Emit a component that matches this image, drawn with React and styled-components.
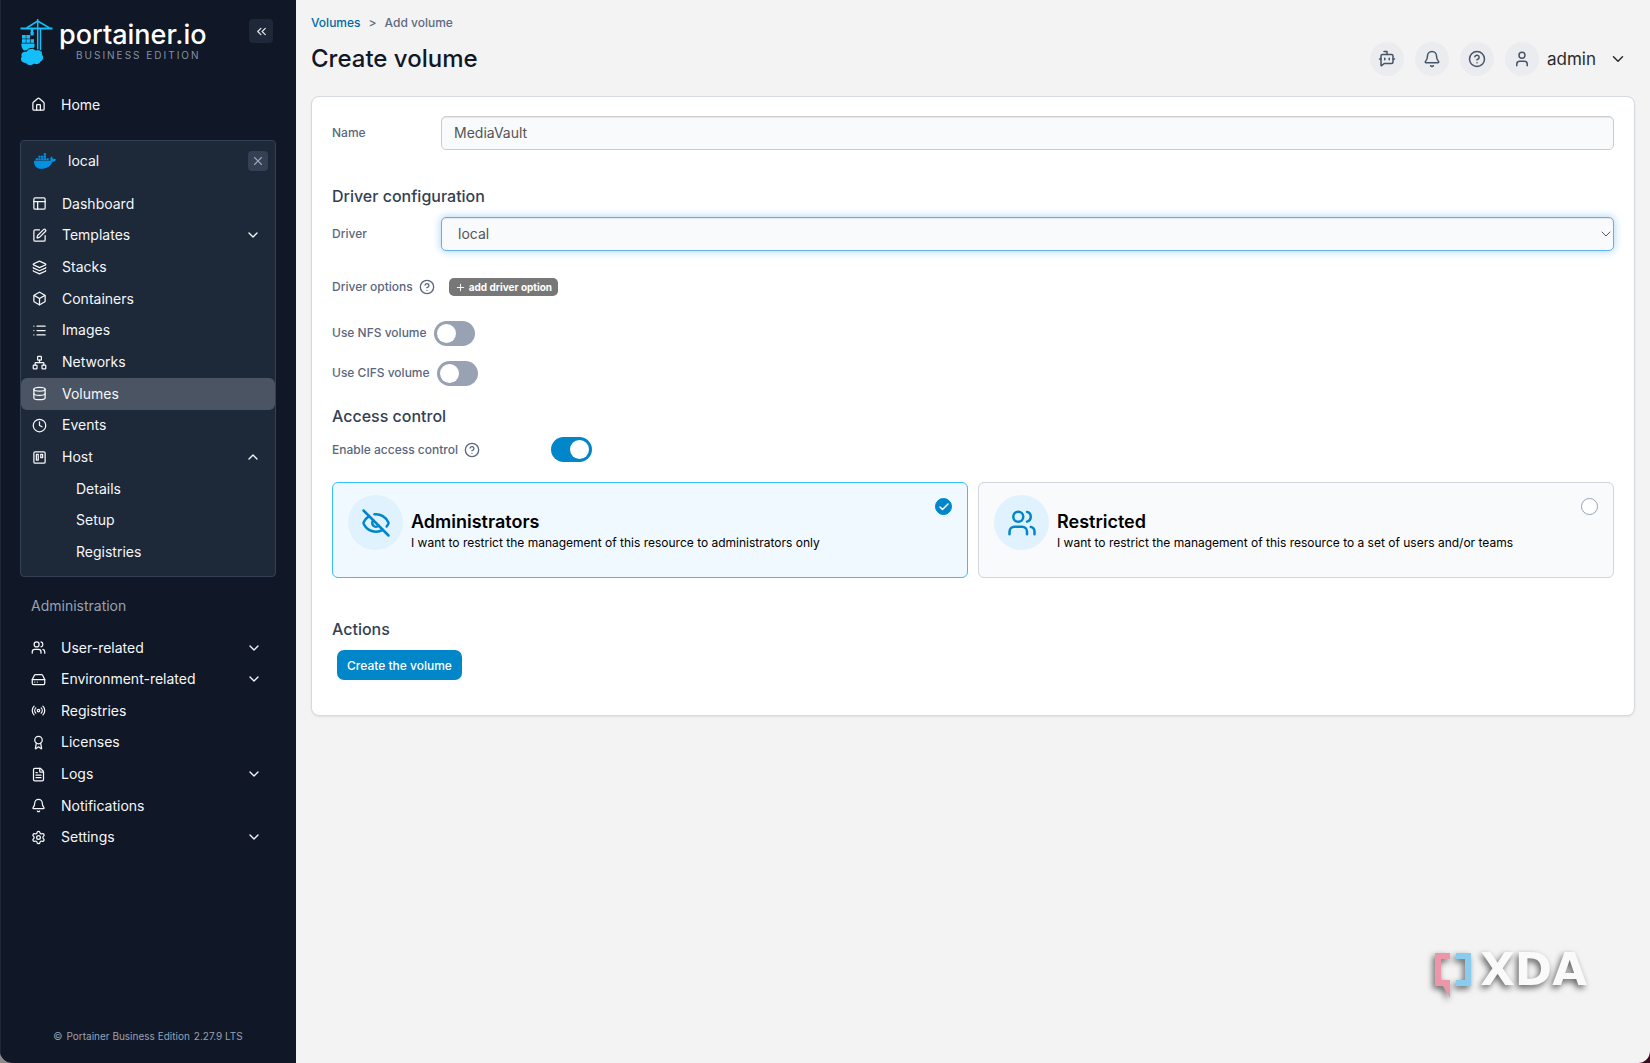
import React, { useState } from "react";
import styled, { createGlobalStyle } from "styled-components";
import {
    Award, Bell, BotMessageSquare, Box, Check, ChevronDown, ChevronUp, ChevronsLeft, CircleHelp, Clock,
    Database, Edit, EyeOff, FileText, HardDrive, Home, Layers, Layout, List, Network, Plus, Radio,
    Settings, Trello, User, Users, X
} from "lucide-react";
import { FaDocker } from "react-icons/fa";

const GlobalStyle = createGlobalStyle`
    * {
        box-sizing: border-box;
    }
    body {
        margin: 0;
        font-family: Inter, "Liberation Sans", sans-serif;
        background: linear-gradient(to right, #8d8a88, #3c0a20);
    }
    button, input, select {
        font-family: inherit;
    }
`;

// whole window, corners are rounded at the bottom
const Page = styled.div`
    display: flex;
    min-height: 100vh;
    border-radius: 0 0 12px 12px;
    overflow: hidden;
    background-color: #f3f3f3;
`;

// ---------- sidebar ----------

const Sidebar = styled.aside`
    display: flex;
    flex-direction: column;
    flex: 0 0 296px;
    padding: 19px 20px 16px 19px;
    border-left: 1px solid #1f2735;
    background-color: #101726;
    color: #f5f7fa;
`;

const SidebarHeader = styled.div`
    display: flex;
    align-items: flex-start;
    height: 48px;
    margin-bottom: 21px;
`;

const BrandText = styled.div`
    display: flex;
    flex-direction: column;
    flex: 1;
    padding-left: 5px;
`;

const BrandName = styled.span`
    font-size: 27px;
    line-height: 32px;
    font-weight: 500;
    color: #ffffff;
`;

const BrandEdition = styled.span`
    padding-left: 17px;
    font-size: 10px;
    line-height: 8px;
    font-weight: 400;
    letter-spacing: 2px;
    color: #8791a3;
`;

const SquareButton = styled.button`
    display: flex;
    align-items: center;
    justify-content: center;
    width: ${props => props.$size}px;
    height: ${props => props.$size}px;
    margin: 0 ${props => props.$end}px 0 auto;
    padding: 0;
    border: none;
    border-radius: 4px;
    background-color: ${props => props.$bg};
    color: ${props => props.$color};
`;

const EnvironmentBox = styled.section`
    margin: 19px 0;
    padding-bottom: 8px;
    border: 1px solid #344054;
    border-radius: 4px;
    background-color: #1d2838;
`;

const EnvironmentHeader = styled.div`
    display: flex;
    align-items: center;
    gap: 12px;
    height: 40px;
    margin-bottom: 7px;
    padding-left: 13px;
    font-size: 14px;
    line-height: 16px;
`;

// rows share the height of the list equally
const NavList = styled.ul`
    display: grid;
    grid-auto-rows: 1fr;
    min-height: ${props => props.$height}px;
    margin: 0;
    padding: 0;
    list-style: none;
`;

const NavLink = styled.a`
    display: flex;
    align-items: center;
    gap: 15px;
    height: 100%;
    padding: 0 14px 0 ${props => props.$nested ? 55 : 11}px;
    border-radius: 6px;
    background-color: ${props => props.$active ? '#4a5463' : 'transparent'};
    color: inherit;
    font-size: 14px;
    line-height: 20px;
    text-decoration: none;
    svg {
        flex: none;
    }
    svg:last-child:not(:first-child) {
        margin-left: auto;
    }
`;

const SidebarTitle = styled.h2`
    margin: 0 0 16px;
    padding-left: 11px;
    font-size: 14px;
    line-height: 20px;
    font-weight: 400;
    color: #98a2b3;
`;

const SidebarFooter = styled.footer`
    display: flex;
    justify-content: center;
    gap: 4px;
    margin-top: auto;
    font-size: 10px;
    line-height: 22px;
    color: #98a2b3;
`;

// ---------- content ----------

const Main = styled.main`
    display: flex;
    flex-direction: column;
    flex: 1;
    min-width: 0;
    padding: 14px 15px 64px;
`;

const Breadcrumbs = styled.nav`
    display: flex;
    gap: 8px;
    font-size: 12px;
    line-height: 17px;
    font-weight: 500;
    color: #5d6a82;
    a {
        color: #026aa2;
        text-decoration: none;
    }
`;

const TitleBar = styled.header`
    display: flex;
    align-items: center;
    justify-content: space-between;
    height: 34px;
    margin: 11px 0 20px;
`;

const Title = styled.h1`
    margin: 0;
    font-size: 24px;
    line-height: 32px;
    font-weight: 500;
    color: #101828;
`;

const HeaderActions = styled.div`
    display: flex;
    align-items: center;
    gap: 11px;
`;

const RoundButton = styled.button`
    display: flex;
    align-items: center;
    justify-content: center;
    width: 34px;
    height: 34px;
    padding: 0;
    border: none;
    border-radius: 50%;
    background-color: #eaecf0;
    color: #475467;
`;

const UserMenu = styled.button`
    display: flex;
    align-items: center;
    padding: 0 8px 0 0;
    border: none;
    background: none;
    color: #2b2b2b;
    font-size: 17px;
    line-height: 24px;
`;

const Avatar = styled.span`
    display: flex;
    align-items: center;
    justify-content: center;
    width: 34px;
    height: 34px;
    margin-right: 8px;
    border-radius: 50%;
    background-color: #eaecf0;
    color: #475467;
`;

const UserName = styled.span`
    margin-right: 13px;
`;

const Card = styled.form`
    padding: 19px 20px 35px;
    border: 1px solid #d5d9e0;
    border-radius: 8px;
    background-color: #ffffff;
    box-shadow: 0 1px 2px rgba(16, 24, 40, 0.08);
`;

const FieldRow = styled.div`
    display: grid;
    grid-template-columns: ${props => props.$labelWidth || 109}px 1fr;
    align-items: center;
`;

const InlineRow = styled.div`
    display: flex;
    align-items: center;
    gap: ${props => props.$gap}px;
    height: 26px;
    margin-top: ${props => props.$top}px;
`;

const Label = styled.label`
    display: flex;
    align-items: center;
    gap: 6px;
    font-size: 12px;
    line-height: 18px;
    font-weight: 500;
    color: #5a6780;
`;

const SectionTitle = styled.h2`
    margin: ${props => props.$top}px 0 11px;
    font-size: 16px;
    line-height: 20px;
    font-weight: 500;
    color: #344054;
`;

const TextInput = styled.input`
    width: 100%;
    height: 34px;
    padding: 0 12px 2px;
    border: 1px solid #cccccc;
    border-radius: 5px;
    background-color: #f9fafb;
    box-shadow: inset 0 1px 1px rgba(0, 0, 0, 0.08);
    color: #555555;
    font-size: 14px;
`;

const SelectWrapper = styled.div`
    position: relative;
    svg {
        position: absolute;
        right: 0;
        top: 9px;
        color: #555555;
        pointer-events: none;
    }
`;

const Select = styled.select`
    display: block;
    width: 100%;
    height: 34px;
    padding: 0 16px 2px;
    border: 1px solid #66afe9;
    border-radius: 5px;
    outline: none;
    appearance: none;
    background-color: #f9fafb;
    box-shadow: inset 0 1px 1px rgba(0, 0, 0, 0.08), 0 0 8px rgba(102, 175, 233, 0.6);
    color: #555555;
    font-size: 14px;
`;

const BadgeButton = styled.button`
    display: flex;
    align-items: center;
    gap: 3px;
    height: 18px;
    padding: 0 6px;
    border: none;
    border-radius: 5px;
    background-color: #777777;
    color: #ffffff;
    font-size: 10px;
    line-height: 18px;
    font-weight: 700;
`;

const Toggle = styled.input.attrs({ type: 'checkbox' })`
    display: flex;
    align-items: center;
    justify-content: ${props => props.checked ? 'flex-end' : 'flex-start'};
    width: 41px;
    height: 25px;
    margin: 0;
    padding: 3px;
    border-radius: 13px;
    appearance: none;
    background-color: ${props => props.checked ? '#0086c9' : '#98a2b3'};
    &::before {
        content: '';
        width: 19px;
        height: 19px;
        border-radius: 50%;
        background-color: #ffffff;
    }
`;

const AccessOptions = styled.div`
    display: grid;
    grid-template-columns: 1fr 1fr;
    gap: 10px;
    margin-top: 20px;
`;

const AccessOption = styled.label`
    display: flex;
    align-items: flex-start;
    min-height: 96px;
    padding: 12px 15px;
    border: 1px solid ${props => props.$selected ? '#36bffa' : '#d0d5dd'};
    border-radius: 6px;
    background-color: ${props => props.$selected ? '#f0f9ff' : '#f9fafb'};
    color: #000000;
`;

const OptionIcon = styled.span`
    display: flex;
    align-items: center;
    justify-content: center;
    width: 55px;
    height: 55px;
    margin-right: 8px;
    border-radius: 50%;
    background-color: #e0f2fe;
    color: #0086c9;
`;

const OptionText = styled.span`
    display: flex;
    flex-direction: column;
    flex: 1;
    padding-top: 16px;
`;

const OptionTitle = styled.strong`
    font-size: 18px;
    line-height: 22px;
    font-weight: 600;
`;

const OptionDescription = styled.span`
    font-size: 12px;
    line-height: 20px;
`;

const RadioMark = styled.span`
    display: grid;
    place-items: center;
    margin-top: 3px;
    color: #ffffff;
    svg, input {
        grid-area: 1 / 1;
    }
`;

const RadioInput = styled.input.attrs({ type: 'radio' })`
    width: 17px;
    height: 17px;
    margin: 0;
    border: 1px solid ${props => props.checked ? '#0086c9' : '#98a2b3'};
    border-radius: 50%;
    appearance: none;
    background-color: ${props => props.checked ? '#0086c9' : '#ffffff'};
`;

const PrimaryButton = styled.button`
    height: 30px;
    margin-left: 5px;
    padding: 0 10px;
    border: none;
    border-radius: 7px;
    background-color: #0086c9;
    color: #ffffff;
    font-size: 12px;
    font-weight: 500;
`;

const Watermark = styled.div`
    display: flex;
    align-items: flex-start;
    gap: 8px;
    margin: auto 48px 0 auto;
    color: #fafafa;
    font-family: "DejaVu Sans", sans-serif;
    font-size: 45px;
    line-height: 34px;
    font-weight: 700;
    filter: drop-shadow(-2px 3px 3px rgba(0, 0, 0, 0.6));
`;

const CraneLogo = () => (
    <svg width="34" height="48" viewBox="0 0 34 48" fill="none" stroke="#13bef9" aria-hidden="true">
        <path d="M0.5 9.5H32.5" strokeWidth="1.8" />
        <path d="M17.7 0V32M20.5 9V34M17.7 2L6.5 9M17.7 2L29.5 9" strokeWidth="1.5" />
        <path d="M12 10V15" strokeWidth="2.6" />
        <g fill="#13bef9" stroke="none">
            <rect x="10.6" y="13" width="3" height="3.5" />
            <rect x="2" y="16" width="3.8" height="3.6" />
            <rect x="6.3" y="16" width="3.8" height="3.6" />
            <rect x="2" y="20.2" width="3.8" height="3.6" />
            <rect x="6.3" y="20.2" width="3.8" height="3.6" />
            <rect x="10.6" y="20.2" width="3.4" height="3.6" />
            <path d="M1.3 24.5H14.5V28L10 31.5H4C2 30 1.3 27.5 1.3 24.5Z" />
        </g>
        <path
            d="M6 44C2 44.5-.5 40.5 1.8 37.8C.3 34.5 3.5 31.5 6.5 32.5C8 28.8 14 28.5 15.7 31.3C19 29.8 22.5 32 22 35.5C24.2 38 23 41.5 20.5 42.5C19.5 45 16 45.8 14 44.5C11.5 46.8 7.5 46.5 6 44Z"
            fill="#13bef9"
            strokeWidth="0"
        />
        <path d="M2.5 33.5C3.5 32.3 5 32 6.5 32.3C8 28.8 14 28.5 15.7 31.1C18 30 20 30.8 21 32.2" stroke="#101726" strokeWidth="1" />
    </svg>
);

// brackets of the watermark
const XdaMark = () => (
    <svg width="37" height="46" viewBox="0 0 37 46" aria-hidden="true">
        <path d="M0 0H15V6H6V27H15V45L8 33H0Z" fill="#ec96aa" />
        <path d="M21 0H36V33H21V27H30V6H21Z" fill="#8bcbed" />
    </svg>
);

const environmentItems = [
    { label: 'Dashboard', icon: Layout },
    { label: 'Templates', icon: Edit, chevron: 'down' },
    { label: 'Stacks', icon: Layers },
    { label: 'Containers', icon: Box },
    { label: 'Images', icon: List },
    { label: 'Networks', icon: Network },
    { label: 'Volumes', icon: Database, active: true },
    { label: 'Events', icon: Clock },
    { label: 'Host', icon: Trello, chevron: 'up' },
    { label: 'Details', nested: true },
    { label: 'Setup', nested: true },
    { label: 'Registries', nested: true },
];

const adminItems = [
    { label: 'User-related', icon: Users, chevron: 'down' },
    { label: 'Environment-related', icon: HardDrive, chevron: 'down' },
    { label: 'Registries', icon: Radio },
    { label: 'Licenses', icon: Award },
    { label: 'Logs', icon: FileText, chevron: 'down' },
    { label: 'Notifications', icon: Bell },
    { label: 'Settings', icon: Settings, chevron: 'down' },
];

const NavItem = ({ item }) => {
    const Icon = item.icon;
    return (
        <li>
            <NavLink href="#" $active={item.active} $nested={item.nested}>
                {Icon && <Icon size={15} />}
                <span>{item.label}</span>
                {item.chevron === 'down' && <ChevronDown size={16} />}
                {item.chevron === 'up' && <ChevronUp size={16} />}
            </NavLink>
        </li>
    );
};

const accessOptions = [
    {
        id: 'administrators',
        icon: EyeOff,
        title: 'Administrators',
        text: 'I want to restrict the management of this resource to administrators only',
    },
    {
        id: 'restricted',
        icon: Users,
        title: 'Restricted',
        text: 'I want to restrict the management of this resource to a set of users and/or teams',
    },
];

const App = () => {
    const [name, setName] = useState('MediaVault');
    const [nfs, setNfs] = useState(false);
    const [cifs, setCifs] = useState(false);
    const [accessControl, setAccessControl] = useState(true);
    const [ownership, setOwnership] = useState('administrators');

    return (
        <>
            <GlobalStyle />
            <Page>
                <Sidebar>
                    <SidebarHeader>
                        <CraneLogo />
                        <BrandText>
                            <BrandName>portainer.io</BrandName>
                            <BrandEdition>BUSINESS EDITION</BrandEdition>
                        </BrandText>
                        <SquareButton type="button" aria-label="Collapse" $size={24} $end={3} $bg="#1d2838" $color="#e4e7ec">
                            <ChevronsLeft size={15} />
                        </SquareButton>
                    </SidebarHeader>
                    <NavList $height={33}>
                        <NavItem item={{ label: 'Home', icon: Home }} />
                    </NavList>
                    <EnvironmentBox>
                        <EnvironmentHeader>
                            <FaDocker size={22} color="#0091e2" />
                            <span>local</span>
                            <SquareButton type="button" aria-label="Close" $size={20} $end={7} $bg="#344054" $color="#98a2b3">
                                <X size={14} />
                            </SquareButton>
                        </EnvironmentHeader>
                        <NavList $height={380}>
                            {environmentItems.map(item => <NavItem key={item.label} item={item} />)}
                        </NavList>
                    </EnvironmentBox>
                    <SidebarTitle>Administration</SidebarTitle>
                    <NavList $height={221}>
                        {adminItems.map(item => <NavItem key={item.label} item={item} />)}
                    </NavList>
                    <SidebarFooter>
                        <span>©</span>
                        <span>Portainer Business Edition</span>
                        <span>2.27.9 LTS</span>
                    </SidebarFooter>
                </Sidebar>
                <Main>
                    <Breadcrumbs>
                        <a href="#">Volumes</a>
                        <span>&gt;</span>
                        <span>Add volume</span>
                    </Breadcrumbs>
                    <TitleBar>
                        <Title>Create volume</Title>
                        <HeaderActions>
                            <RoundButton type="button" aria-label="Assistant"><BotMessageSquare size={18} /></RoundButton>
                            <RoundButton type="button" aria-label="Notifications"><Bell size={18} /></RoundButton>
                            <RoundButton type="button" aria-label="Help"><CircleHelp size={18} /></RoundButton>
                            <UserMenu type="button">
                                <Avatar><User size={18} /></Avatar>
                                <UserName>admin</UserName>
                                <ChevronDown size={18} />
                            </UserMenu>
                        </HeaderActions>
                    </TitleBar>
                    <Card onSubmit={e => e.preventDefault()}>
                        <FieldRow>
                            <Label htmlFor="name">Name</Label>
                            <TextInput id="name" value={name} onChange={e => setName(e.target.value)} />
                        </FieldRow>
                        <SectionTitle $top={36}>Driver configuration</SectionTitle>
                        <FieldRow>
                            <Label htmlFor="driver">Driver</Label>
                            <SelectWrapper>
                                <Select id="driver" defaultValue="local">
                                    <option value="local">local</option>
                                </Select>
                                <ChevronDown size={16} strokeWidth={1.5} />
                            </SelectWrapper>
                        </FieldRow>
                        <InlineRow $gap={14} $top={23}>
                            <Label as="span">Driver options <CircleHelp size={16} /></Label>
                            <BadgeButton type="button"><Plus size={11} /> add driver option</BadgeButton>
                        </InlineRow>
                        <InlineRow $gap={7} $top={20}>
                            <Label htmlFor="nfs">Use NFS volume</Label>
                            <Toggle id="nfs" checked={nfs} onChange={() => setNfs(!nfs)} />
                        </InlineRow>
                        <InlineRow $gap={7} $top={14}>
                            <Label htmlFor="cifs">Use CIFS volume</Label>
                            <Toggle id="cifs" checked={cifs} onChange={() => setCifs(!cifs)} />
                        </InlineRow>
                        <SectionTitle $top={20}>Access control</SectionTitle>
                        <FieldRow $labelWidth={219}>
                            <Label htmlFor="access">Enable access control <CircleHelp size={16} /></Label>
                            <Toggle id="access" checked={accessControl} onChange={() => setAccessControl(!accessControl)} />
                        </FieldRow>
                        <AccessOptions>
                            {accessOptions.map(({ id, icon: Icon, title, text }) => (
                                <AccessOption key={id} $selected={ownership === id}>
                                    <OptionIcon><Icon size={30} /></OptionIcon>
                                    <OptionText>
                                        <OptionTitle>{title}</OptionTitle>
                                        <OptionDescription>{text}</OptionDescription>
                                    </OptionText>
                                    <RadioMark>
                                        <RadioInput name="ownership" checked={ownership === id} onChange={() => setOwnership(id)} />
                                        {ownership === id && <Check size={12} strokeWidth={3} />}
                                    </RadioMark>
                                </AccessOption>
                            ))}
                        </AccessOptions>
                        <SectionTitle $top={41}>Actions</SectionTitle>
                        <PrimaryButton type="submit">Create the volume</PrimaryButton>
                    </Card>
                    <Watermark>
                        <XdaMark />
                        <span>XDA</span>
                    </Watermark>
                </Main>
            </Page>
        </>
    );
};

export default App;
